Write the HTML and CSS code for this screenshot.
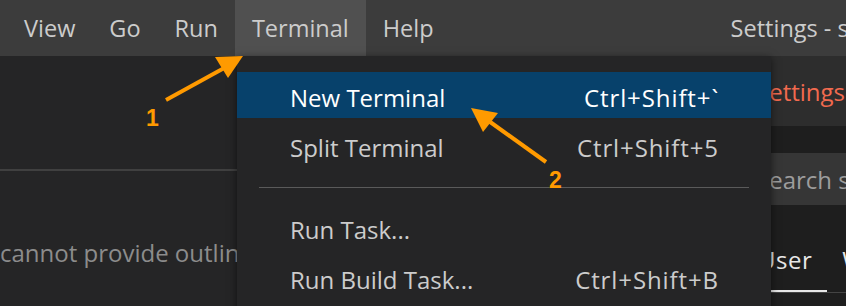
FILE: index.html
```html
<!DOCTYPE html>
<html>
<head>
<meta charset="utf-8">
<link rel="stylesheet" href="styles.css">
</head>
<body>
<div class="window">
  <div class="titlebar">
    <span class="menu-item">View</span>
    <span class="menu-item">Go</span>
    <span class="menu-item">Run</span>
    <span class="menu-item active">Terminal</span>
    <span class="menu-item">Help</span>
    <span class="title">Settings - settings.json - Visual Studio Code</span>
  </div>
  <div class="main">
    <div class="sidebar">
      <div class="sidebar-top"></div>
      <div class="sidebar-msg">cannot provide outline information.</div>
    </div>
    <div class="editor">
      <div class="tabs"><span class="tab">Settings</span></div>
      <div class="search-wrap"><div class="search">Search settings</div></div>
      <div class="scopes">
        <span class="scope current">User</span>
        <span class="scope">Workspace</span>
      </div>
    </div>
  </div>

  <div class="dropdown">
    <div class="item selected"><span>New Terminal</span><span class="key">Ctrl+Shift+`</span></div>
    <div class="item"><span>Split Terminal</span><span class="key">Ctrl+Shift+5</span></div>
    <div class="sep"></div>
    <div class="item"><span>Run Task...</span><span class="key"></span></div>
    <div class="item"><span>Run Build Task...</span><span class="key">Ctrl+Shift+B</span></div>
  </div>

  <svg class="annot" width="846" height="306" viewBox="0 0 846 306">
    <line x1="166" y1="100" x2="226" y2="67" stroke="#ff9a00" stroke-width="4"/>
    <polygon points="243,56 215,57 228,78" fill="#ff9a00"/>
    <text x="146" y="126" class="num">1</text>
    <line x1="546" y1="162" x2="486" y2="119" stroke="#ff9a00" stroke-width="4"/>
    <polygon points="471,108 498,113 483,132" fill="#ff9a00"/>
    <text x="549" y="188" class="num">2</text>
  </svg>
</div>
</body>
</html>
```
FILE: styles.css
```css
html, body {
  margin: 0;
  padding: 0;
}
body {
  background: #1e1e1e;
  font-family: "Open Sans", "Noto Sans", sans-serif;
  color: #cccccc;
}
.window {
  position: relative;
  width: 846px;
  height: 306px;
  overflow: hidden;
}
.titlebar {
  height: 56px;
  background: #3c3c3c;
  display: flex;
  align-items: stretch;
  padding-left: 7px;
  font-size: 23.5px;
  white-space: nowrap;
}
.menu-item {
  display: flex;
  align-items: center;
  padding: 0 17px;
  color: #cccccc;
  flex-shrink: 0;
}
.menu-item.active {
  background: #505050;
}
.title {
  display: flex;
  align-items: center;
  margin-left: 280px;
  flex-shrink: 0;
  color: #cccccc;
}
.main {
  display: flex;
  height: 250px;
}
.sidebar {
  width: 237px;
  flex-shrink: 0;
  background: #252526;
  overflow: hidden;
}
.sidebar-top {
  height: 113px;
  border-bottom: 2px solid #404040;
}
.sidebar-msg {
  margin-top: 66px;
  font-size: 24px;
  color: #8c8c8c;
  white-space: nowrap;
  line-height: 32px;
}
.editor {
  flex: 1;
  display: flex;
  flex-direction: column;
  background: #1e1e1e;
  overflow: hidden;
}
.tabs {
  height: 70px;
  background: #2d2d2d;
  display: flex;
  align-items: center;
  padding-left: 519px;
  white-space: nowrap;
}
.tab {
  font-size: 24px;
  color: #f26a4f;
}
.search-wrap {
  padding-top: 27px;
}
.search {
  height: 52px;
  background: #363636;
  display: flex;
  align-items: center;
  padding-left: 519px;
  font-size: 24px;
  color: #9d9d9d;
  white-space: nowrap;
}
.scopes {
  margin-top: 38px;
  display: flex;
  padding-left: 521px;
  border-bottom: 1px solid #444444;
  white-space: nowrap;
  height: 50px;
  box-sizing: border-box;
}
.scope {
  font-size: 24px;
  color: #e7e7e7;
  flex-shrink: 0;
  line-height: 34px;
  letter-spacing: 0.5px;
}
.scope.current {
  border-bottom: 2px solid #e7e7e7;
  padding-right: 15px;
  margin-right: 15px;
}
.dropdown {
  position: absolute;
  left: 237px;
  top: 56px;
  width: 534px;
  height: 270px;
  background: #252526;
  padding-top: 16px;
  box-sizing: border-box;
  box-shadow: 0 2px 8px rgba(0, 0, 0, 0.55);
  font-size: 24px;
}
.item {
  height: 46px;
  margin-bottom: 4px;
  display: flex;
  justify-content: space-between;
  align-items: center;
  padding: 4px 53px 0 53px;
  box-sizing: border-box;
  color: #cccccc;
  white-space: nowrap;
}
.item.selected {
  background: #07416b;
  color: #ffffff;
}
.key {
  letter-spacing: 0.9px;
  margin-right: -1px;
}
.sep {
  height: 1px;
  background: #5a5a5a;
  margin: 19px 22px 16px 22px;
}
.annot {
  position: absolute;
  left: 0;
  top: 0;
}
.num {
  font-family: "Liberation Sans", Arial, sans-serif;
  font-weight: bold;
  font-size: 23px;
  fill: #ff9a00;
}
```
